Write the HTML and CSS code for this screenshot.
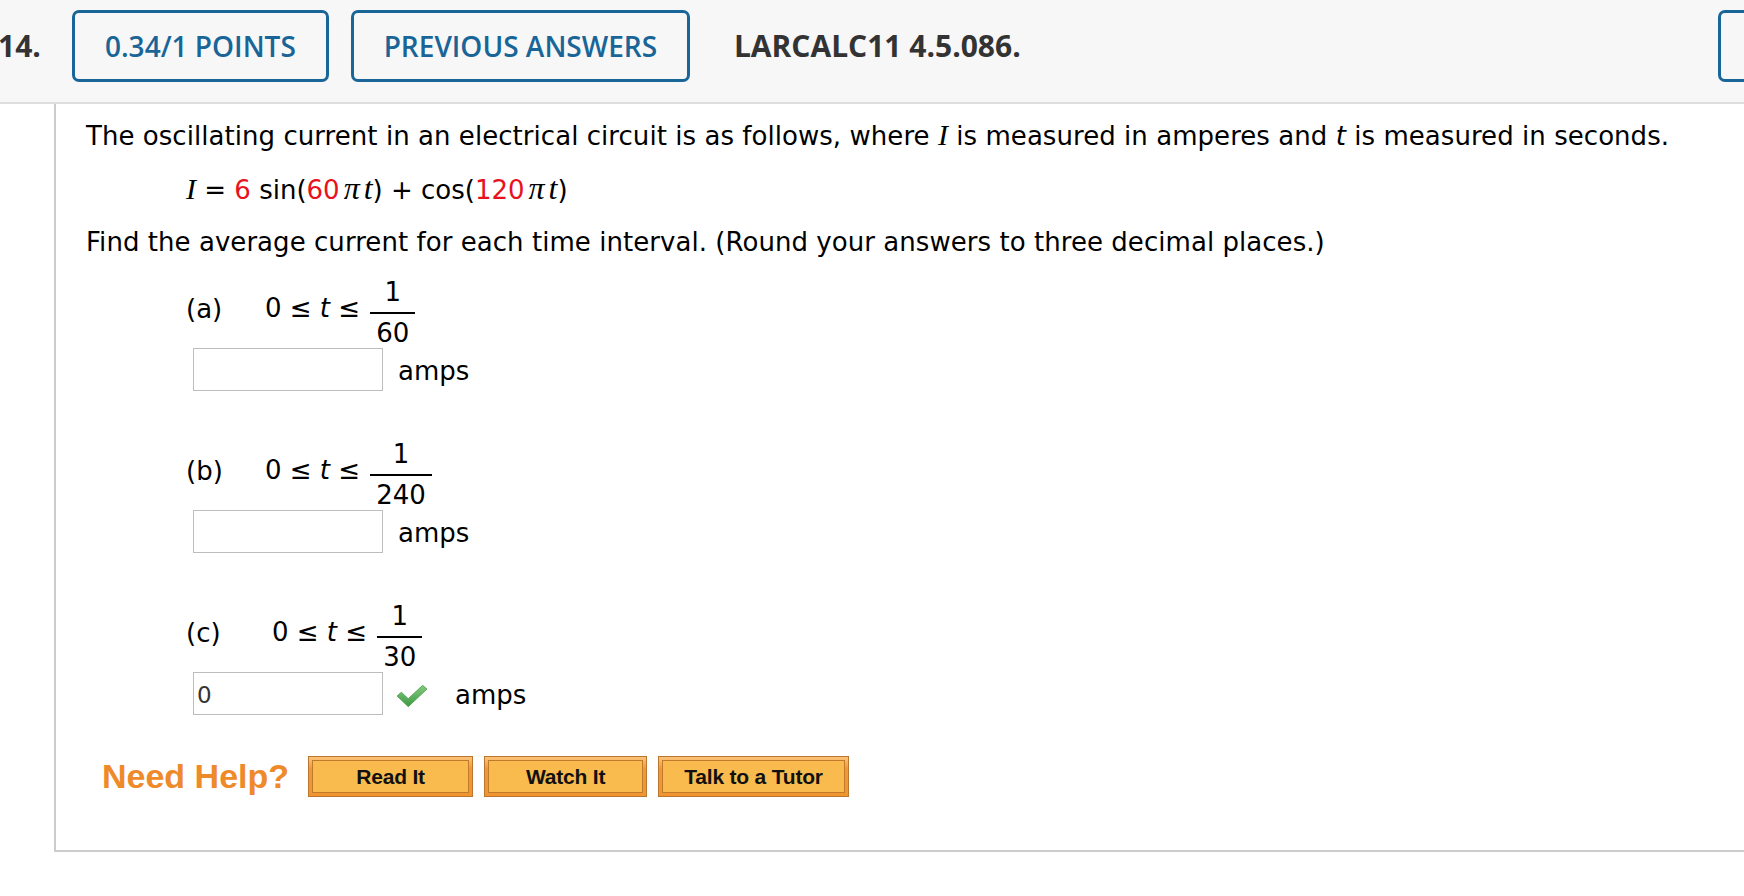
FILE: index.html
```html
<!DOCTYPE html>
<html>
<head>
<meta charset="utf-8">
<link rel="stylesheet" href="styles.css">
</head>
<body>
<header class="qhead">
  <span class="qnum">14.</span>
  <span class="pill pill-points">0.34/1 POINTS</span>
  <span class="pill pill-prev">PREVIOUS ANSWERS</span>
  <span class="qid">LARCALC11 4.5.086.</span>
  <span class="pill pill-edge"></span>
</header>
<main class="qbody">
  <p class="para">The oscillating current in an electrical circuit is as follows, where <i class="serif-i">I</i> is measured in amperes and <i>t</i> is measured in seconds.</p>
  <p class="para formula"><i class="serif-i">I</i> = <span class="red">6</span> sin(<span class="red">60</span><i class="mvar mpi">&pi;</i><i class="mvar">t</i>) + cos(<span class="red">120</span><i class="mvar mpi">&pi;</i><i class="mvar">t</i>)</p>
  <p class="para">Find the average current for each time interval. (Round your answers to three decimal places.)</p>

  <section class="part">
    <div class="part-row">
      <span class="plabel">(a)</span>
      <span class="expr">0 &le; <i>t</i> &le;</span>
      <span class="frac"><span class="num">1</span><span class="den">60</span></span>
    </div>
    <div class="answer-row">
      <input class="ans" type="text" value="">
      <span class="unit">amps</span>
    </div>
  </section>

  <section class="part">
    <div class="part-row">
      <span class="plabel">(b)</span>
      <span class="expr">0 &le; <i>t</i> &le;</span>
      <span class="frac"><span class="num">1</span><span class="den">240</span></span>
    </div>
    <div class="answer-row">
      <input class="ans" type="text" value="">
      <span class="unit">amps</span>
    </div>
  </section>

  <section class="part">
    <div class="part-row">
      <span class="plabel">(c)</span>
      <span class="expr expr-wide">0 &le; <i>t</i> &le;</span>
      <span class="frac"><span class="num">1</span><span class="den">30</span></span>
    </div>
    <div class="answer-row">
      <input class="ans" type="text" value="0">
      <svg class="check" width="32" height="24" viewBox="0 0 30 22">
        <defs>
          <linearGradient id="g" x1="0" y1="0" x2="0" y2="1">
            <stop offset="0" stop-color="#82cc7e"/>
            <stop offset="1" stop-color="#3e9843"/>
          </linearGradient>
        </defs>
        <path d="M1 11 L5 7.5 L11.5 13.5 L25 1 L29 4.5 L11.5 21 Z" fill="url(#g)" stroke="#4e9e4e" stroke-width="0.8" stroke-linejoin="round"/>
      </svg>
      <span class="unit unit-checked">amps</span>
    </div>
  </section>

  <div class="help-row">
    <span class="need-help">Need Help?</span>
    <span class="hbtn"><span class="hbtn-in">Read It</span></span>
    <span class="hbtn"><span class="hbtn-in">Watch It</span></span>
    <span class="hbtn"><span class="hbtn-in">Talk to a Tutor</span></span>
  </div>
</main>
</body>
</html>
```
FILE: styles.css
```css
html, body {
  margin: 0;
  padding: 0;
  background: #ffffff;
  overflow: hidden;
}

.qhead {
  display: flex;
  align-items: center;
  height: 102px;
  background: #f7f7f7;
  border-bottom: 2px solid #dedede;
  font-family: "Open Sans", "Liberation Sans", sans-serif;
  white-space: nowrap;
}

.qnum {
  margin-left: -2px;
  margin-top: -11px;
  font-size: 30px;
  font-weight: 700;
  color: #333333;
}

.pill {
  box-sizing: border-box;
  height: 72px;
  margin-top: -11px;
  display: flex;
  align-items: center;
  justify-content: center;
  border: 3px solid #1a6598;
  border-radius: 7px;
  background: #f7f7f7;
  color: #1a6598;
  font-size: 28px;
  font-weight: 600;
}

.pill-points {
  width: 257px;
  margin-left: 31px;
}

.pill-prev {
  width: 339px;
  margin-left: 22px;
}

.qid {
  margin-left: 44px;
  margin-top: -11px;
  font-size: 30px;
  font-weight: 700;
  color: #333333;
}

.pill-edge {
  margin-left: auto;
  width: 40px;
  margin-right: -14px;
}

.qbody {
  margin-left: 54px;
  border-left: 2px solid #cccccc;
  border-bottom: 2px solid #cccccc;
  padding: 14px 0 53px 30px;
  font-family: "DejaVu Sans", Verdana, sans-serif;
  font-size: 26px;
  color: #000000;
}

.para {
  margin: 0 0 19px 0;
  line-height: 33px;
  white-space: nowrap;
  letter-spacing: 0.05px;
}

.formula {
  margin-left: 100px;
  letter-spacing: 0;
}

.serif-i {
  font-family: "Liberation Serif", "DejaVu Serif", serif;
  font-style: italic;
  font-size: 30px;
}

.mvar {
  font-family: "Liberation Serif", "DejaVu Serif", serif;
  font-style: italic;
  font-size: 32px;
}

.mpi {
  margin-left: 4px;
  margin-right: 4px;
}

.red {
  color: #e8121d;
}

.part {
  margin-left: 100px;
  margin-top: 20px;
}

.part + .part {
  margin-top: 50px;
}

.part-row {
  display: flex;
  align-items: center;
  line-height: 26px;
}

.plabel {
  width: 79px;
  margin-bottom: 8px;
}

.expr {
  margin-right: 10px;
  margin-bottom: 10px;
}

.expr-wide {
  margin-left: 7px;
}

.frac {
  display: inline-flex;
  flex-direction: column;
  align-items: center;
}

.num {
  display: block;
  line-height: 26px;
  padding: 0 6px;
}

.den {
  display: block;
  line-height: 26px;
  margin-top: 7px;
  border-top: 2px solid #000000;
  padding: 6px 6px 0 6px;
}

.answer-row {
  display: flex;
  align-items: center;
  margin-top: 2px;
  margin-left: 7px;
}

.ans {
  box-sizing: border-box;
  width: 190px;
  height: 43px;
  margin: 0;
  border: 1px solid #bdbdbd;
  border-radius: 0;
  padding: 2px 3px 0 3px;
  font-family: "DejaVu Sans", Verdana, sans-serif;
  font-size: 23px;
  color: #333333;
  background: #ffffff;
  outline: none;
}

.unit {
  margin-left: 15px;
  margin-top: 3px;
}

.check {
  margin-left: 13px;
  margin-top: 4px;
}

.unit-checked {
  margin-left: 27px;
}

.help-row {
  display: flex;
  align-items: center;
  margin-top: 41px;
  margin-left: 16px;
}

.need-help {
  font-family: "Liberation Sans", Arial, sans-serif;
  font-size: 34px;
  font-weight: 700;
  color: #ee8a2a;
  margin-right: 19px;
}

.hbtn {
  box-sizing: border-box;
  display: flex;
  height: 41px;
  padding: 3px;
  margin-right: 11px;
  border: 1px solid #b8762e;
  background: linear-gradient(#fbc37a, #f2983a 30%, #f0952f);
}

.hbtn-in {
  box-sizing: border-box;
  display: flex;
  align-items: center;
  justify-content: center;
  height: 100%;
  border: 1px solid #c07a2c;
  background: #f9bb4e;
  font-family: "Liberation Sans", Arial, sans-serif;
  font-size: 21px;
  font-weight: 700;
  letter-spacing: -0.2px;
  color: #111111;
}

.hbtn:nth-of-type(2) .hbtn-in { width: 157px; }
.hbtn:nth-of-type(3) .hbtn-in { width: 155px; }
.hbtn:nth-of-type(4) .hbtn-in { width: 183px; }
```
